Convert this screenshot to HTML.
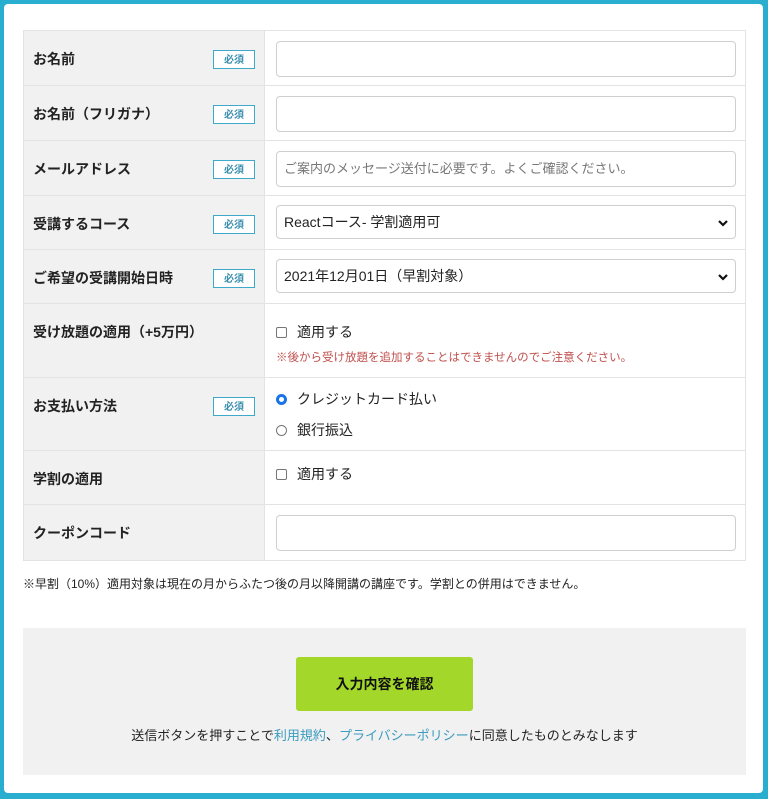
<!DOCTYPE html>
<html><head><meta charset="utf-8"><style>
*{box-sizing:border-box;margin:0;padding:0}
body{width:768px;height:799px;background:#2aaed0;font-family:"Liberation Sans","Noto Sans CJK JP",sans-serif;position:relative;overflow:hidden;color:#222}
.card{position:absolute;left:4px;top:4px;width:759px;height:789px;background:#fff;border-radius:4px}
.row{position:absolute;left:23px;width:723px;border-bottom:1px solid #e3e3e3}
.lab{position:absolute;left:0;top:0;bottom:0;width:242px;background:#f1f1f1;border-right:1px solid #e3e3e3}
.lt{position:absolute;left:10px;top:17px;font-size:14px;font-weight:bold;line-height:22px;color:#222}
.badge{position:absolute;left:190px;top:19px;width:42px;height:19px;border:1.5px solid #3ea9c8;background:#fff;color:#3a8fae;font-size:10px;font-weight:bold;display:flex;align-items:center;justify-content:center;line-height:1}
.badge span{position:relative;top:1px}
.inp{position:absolute;left:253px;top:10px;width:460px;height:36px;border:1px solid #cfcfcf;border-radius:4px;background:#fff;font-size:13px;line-height:34px;padding-left:7px;color:#777}
.sel{color:#222;font-size:14px}
.sel svg{position:absolute;right:6px;top:13px}
.opt{position:absolute;left:253px;font-size:14px;line-height:20px;color:#222}
.cb{display:inline-block;width:11px;height:11px;border:1px solid #767676;border-radius:2px;vertical-align:-1px;margin-right:10px;background:#fff}
.rd{display:inline-block;width:11px;height:11px;border:1px solid #767676;border-radius:50%;vertical-align:-1px;margin-right:10px;background:#fff}
.rd.on{border:3px solid #1a73e8;background:#fff}
</style></head><body>
<div class="card"></div>

<div class="row" style="top:30px;height:56px;border-top:1px solid #e3e3e3"><div class="lab"><div class="lt">お名前</div><div class="badge"><span>必須</span></div></div><div class="inp"></div></div>
<div class="row" style="top:86px;height:55px"><div class="lab"><div class="lt">お名前（フリガナ）</div><div class="badge"><span>必須</span></div></div><div class="inp"></div></div>
<div class="row" style="top:141px;height:55px"><div class="lab"><div class="lt">メールアドレス</div><div class="badge"><span>必須</span></div></div><div class="inp">ご案内のメッセージ送付に必要です。よくご確認ください。</div></div>
<div class="row" style="top:196px;height:54px"><div class="lab"><div class="lt">受講するコース</div><div class="badge"><span>必須</span></div></div><div class="inp sel" style="top:9px;height:34px;line-height:32px">Reactコース- 学割適用可<svg width="12" height="8" viewBox="0 0 12 8"><path d="M2 2l4 4 4-4" stroke="#111" stroke-width="2.2" fill="none"/></svg></div></div>
<div class="row" style="top:250px;height:54px"><div class="lab"><div class="lt">ご希望の受講開始日時</div><div class="badge"><span>必須</span></div></div><div class="inp sel" style="top:9px;height:34px;line-height:32px">2021年12月01日（早割対象）<svg width="12" height="8" viewBox="0 0 12 8"><path d="M2 2l4 4 4-4" stroke="#111" stroke-width="2.2" fill="none"/></svg></div></div>
<div class="row" style="top:304px;height:74px"><div class="lab"><div class="lt">受け放題の適用（+5万円）</div></div>
<div class="opt" style="top:18px"><span class="cb"></span>適用する</div>
<div class="opt" style="top:44px;font-size:11.5px;color:#c0504d">※後から受け放題を追加することはできませんのでご注意ください。</div></div>
<div class="row" style="top:378px;height:73px"><div class="lab"><div class="lt">お支払い方法</div><div class="badge"><span>必須</span></div></div>
<div class="opt" style="top:11px"><span class="rd on"></span>クレジットカード払い</div>
<div class="opt" style="top:42px"><span class="rd"></span>銀行振込</div></div>
<div class="row" style="top:451px;height:54px"><div class="lab"><div class="lt">学割の適用</div></div>
<div class="opt" style="top:13px"><span class="cb"></span>適用する</div></div>
<div class="row" style="top:505px;height:56px"><div class="lab"><div class="lt">クーポンコード</div></div><div class="inp"></div></div>
<div style="position:absolute;left:23px;top:30px;width:1px;height:531px;background:#e3e3e3"></div>
<div style="position:absolute;left:745px;top:30px;width:1px;height:531px;background:#e3e3e3"></div>

<div style="position:absolute;left:23px;top:575px;font-size:12px;line-height:18px;color:#222;white-space:nowrap">※早割（10%）適用対象は現在の月からふたつ後の月以降開講の講座です。学割との併用はできません。</div>

<div style="position:absolute;left:23px;top:628px;width:723px;height:147px;background:#f1f1f1">
<div style="position:absolute;left:273px;top:29px;width:177px;height:54px;background:#a3d72a;border-radius:3px;text-align:center;line-height:54px;font-size:14px;font-weight:bold;color:#111">入力内容を確認</div>
<div style="position:absolute;left:0;width:723px;top:99px;text-align:center;font-size:13px;line-height:18px;color:#222">送信ボタンを押すことで<span style="color:#3a9cbf">利用規約</span>、<span style="color:#3a9cbf">プライバシーポリシー</span>に同意したものとみなします</div>
</div>
</body></html>
